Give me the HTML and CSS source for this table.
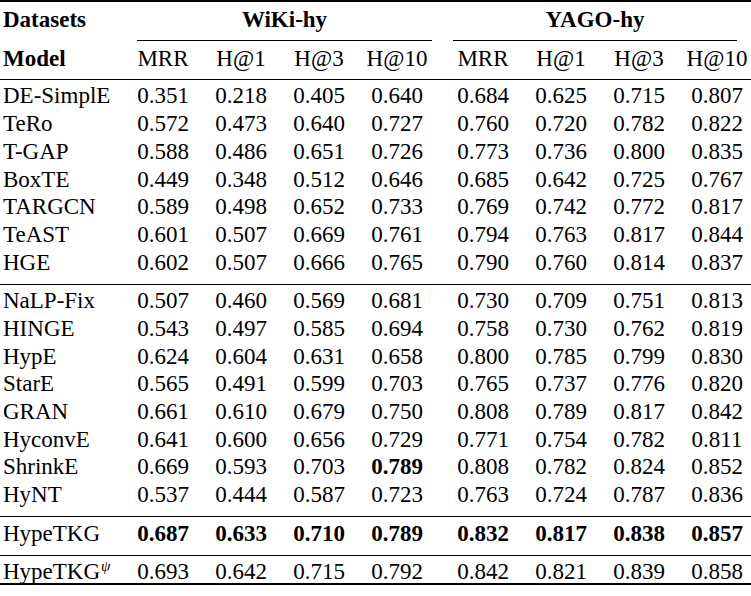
FILE: index.html
```html
<!DOCTYPE html>
<html lang="en">
<head>
<meta charset="utf-8">
<title>Results table</title>
<link rel="stylesheet" href="styles.css">
</head>
<body>
<div class="table">
  <div class="head">
    <div class="row top">
      <div class="lab b">Datasets</div>
      <div class="grp wiki b">WiKi-hy</div>
      <div class="grp yago b">YAGO-hy</div>
    </div>
    <div class="row sub">
      <div class="lab b">Model</div>
      <div class="num">MRR</div><div class="num">H@1</div><div class="num">H@3</div><div class="num">H@10</div>
      <div class="gap"></div>
      <div class="num">MRR</div><div class="num">H@1</div><div class="num">H@3</div><div class="num">H@10</div>
    </div>
  </div>

  <div class="section">
    <div class="row"><div class="lab">DE-SimplE</div><div class="num">0.351</div><div class="num">0.218</div><div class="num">0.405</div><div class="num">0.640</div><div class="gap"></div><div class="num">0.684</div><div class="num">0.625</div><div class="num">0.715</div><div class="num">0.807</div></div>
    <div class="row"><div class="lab">TeRo</div><div class="num">0.572</div><div class="num">0.473</div><div class="num">0.640</div><div class="num">0.727</div><div class="gap"></div><div class="num">0.760</div><div class="num">0.720</div><div class="num">0.782</div><div class="num">0.822</div></div>
    <div class="row"><div class="lab">T-GAP</div><div class="num">0.588</div><div class="num">0.486</div><div class="num">0.651</div><div class="num">0.726</div><div class="gap"></div><div class="num">0.773</div><div class="num">0.736</div><div class="num">0.800</div><div class="num">0.835</div></div>
    <div class="row"><div class="lab">BoxTE</div><div class="num">0.449</div><div class="num">0.348</div><div class="num">0.512</div><div class="num">0.646</div><div class="gap"></div><div class="num">0.685</div><div class="num">0.642</div><div class="num">0.725</div><div class="num">0.767</div></div>
    <div class="row"><div class="lab">TARGCN</div><div class="num">0.589</div><div class="num">0.498</div><div class="num">0.652</div><div class="num">0.733</div><div class="gap"></div><div class="num">0.769</div><div class="num">0.742</div><div class="num">0.772</div><div class="num">0.817</div></div>
    <div class="row"><div class="lab">TeAST</div><div class="num">0.601</div><div class="num">0.507</div><div class="num">0.669</div><div class="num">0.761</div><div class="gap"></div><div class="num">0.794</div><div class="num">0.763</div><div class="num">0.817</div><div class="num">0.844</div></div>
    <div class="row"><div class="lab">HGE</div><div class="num">0.602</div><div class="num">0.507</div><div class="num">0.666</div><div class="num">0.765</div><div class="gap"></div><div class="num">0.790</div><div class="num">0.760</div><div class="num">0.814</div><div class="num">0.837</div></div>
  </div>

  <div class="section">
    <div class="row"><div class="lab">NaLP-Fix</div><div class="num">0.507</div><div class="num">0.460</div><div class="num">0.569</div><div class="num">0.681</div><div class="gap"></div><div class="num">0.730</div><div class="num">0.709</div><div class="num">0.751</div><div class="num">0.813</div></div>
    <div class="row"><div class="lab">HINGE</div><div class="num">0.543</div><div class="num">0.497</div><div class="num">0.585</div><div class="num">0.694</div><div class="gap"></div><div class="num">0.758</div><div class="num">0.730</div><div class="num">0.762</div><div class="num">0.819</div></div>
    <div class="row"><div class="lab">HypE</div><div class="num">0.624</div><div class="num">0.604</div><div class="num">0.631</div><div class="num">0.658</div><div class="gap"></div><div class="num">0.800</div><div class="num">0.785</div><div class="num">0.799</div><div class="num">0.830</div></div>
    <div class="row"><div class="lab">StarE</div><div class="num">0.565</div><div class="num">0.491</div><div class="num">0.599</div><div class="num">0.703</div><div class="gap"></div><div class="num">0.765</div><div class="num">0.737</div><div class="num">0.776</div><div class="num">0.820</div></div>
    <div class="row"><div class="lab">GRAN</div><div class="num">0.661</div><div class="num">0.610</div><div class="num">0.679</div><div class="num">0.750</div><div class="gap"></div><div class="num">0.808</div><div class="num">0.789</div><div class="num">0.817</div><div class="num">0.842</div></div>
    <div class="row"><div class="lab">HyconvE</div><div class="num">0.641</div><div class="num">0.600</div><div class="num">0.656</div><div class="num">0.729</div><div class="gap"></div><div class="num">0.771</div><div class="num">0.754</div><div class="num">0.782</div><div class="num">0.811</div></div>
    <div class="row"><div class="lab">ShrinkE</div><div class="num">0.669</div><div class="num">0.593</div><div class="num">0.703</div><div class="num b">0.789</div><div class="gap"></div><div class="num">0.808</div><div class="num">0.782</div><div class="num">0.824</div><div class="num">0.852</div></div>
    <div class="row"><div class="lab">HyNT</div><div class="num">0.537</div><div class="num">0.444</div><div class="num">0.587</div><div class="num">0.723</div><div class="gap"></div><div class="num">0.763</div><div class="num">0.724</div><div class="num">0.787</div><div class="num">0.836</div></div>
  </div>

  <div class="section">
    <div class="row"><div class="lab">HypeTKG</div><div class="num b">0.687</div><div class="num b">0.633</div><div class="num b">0.710</div><div class="num b">0.789</div><div class="gap"></div><div class="num b">0.832</div><div class="num b">0.817</div><div class="num b">0.838</div><div class="num b">0.857</div></div>
  </div>

  <div class="section last">
    <div class="row"><div class="lab">HypeTKG<span class="sup">ψ</span></div><div class="num">0.693</div><div class="num">0.642</div><div class="num">0.715</div><div class="num">0.792</div><div class="gap"></div><div class="num">0.842</div><div class="num">0.821</div><div class="num">0.839</div><div class="num">0.858</div></div>
  </div>
</div>
</body>
</html>
```

FILE: styles.css
```css
html, body {
  margin: 0;
  padding: 0;
  background: #ffffff;
  overflow: hidden;
}

body {
  font-family: "Liberation Serif", "Times New Roman", serif;
  font-size: 23px;
  color: #000;
}

.table {
  width: 756px;
  border-top: 2px solid #000;
  border-bottom: 2px solid #000;
}

.row {
  display: grid;
  grid-template-columns: 124px repeat(4, 78px) 8px repeat(4, 78px);
  line-height: 27.7px;
  height: 27.7px;
}

.head .row {
  height: auto;
}

.row.top {
  padding-top: 3.9px;
}

.row.top .lab {
  padding-bottom: 7.4px;
}

.grp {
  text-align: center;
  padding-bottom: 6.4px;
  border-bottom: 1px solid #000;
}

.grp.wiki {
  grid-column: 2 / 6;
  margin: 0 4px 0 13px;
}

.grp.yago {
  grid-column: 7 / 11;
  margin: 0 19px 0 9px;
}

.row.sub {
  padding-top: 3.9px;
  padding-bottom: 6.4px;
  border-bottom: 1px solid #000;
}

.section {
  padding: 2.5px 0 7.5px;
  border-bottom: 1px solid #000;
}

.section.last {
  padding: 2.5px 0 0;
  border-bottom: none;
}

.section.last .row {
  height: 25px;
}

.lab {
  padding-left: 3px;
  white-space: nowrap;
}

.num {
  text-align: center;
  white-space: nowrap;
}

.b {
  font-weight: bold;
}

.sup {
  font-style: italic;
  font-size: 15px;
  line-height: 0;
  vertical-align: 8px;
  margin-left: 1px;
}
```
